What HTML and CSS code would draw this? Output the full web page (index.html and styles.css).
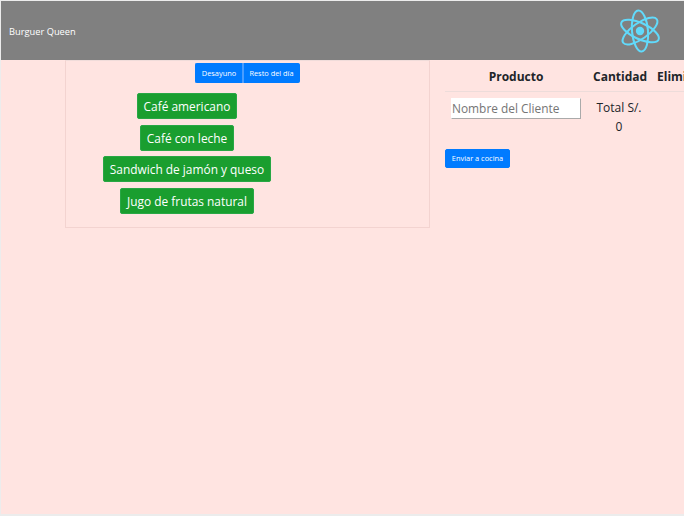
FILE: index.html
```html
<!DOCTYPE html>
<html lang="es">
<head>
<meta charset="utf-8">
<title>Burguer Queen</title>
<link rel="stylesheet" href="styles.css">
</head>
<body>
<div class="app">
  <header class="topbar">
    <span class="brand">Burguer Queen</span>
    <svg class="logo" viewBox="0 0 44 44" aria-hidden="true">
      <circle cx="22" cy="22" r="4.2" fill="#61dafb"/>
      <g fill="none" stroke="#61dafb" stroke-width="2">
        <ellipse cx="22" cy="22" rx="20.5" ry="8" transform="rotate(85 22 22)"/>
        <ellipse cx="22" cy="22" rx="20.5" ry="8" transform="rotate(25 22 22)"/>
        <ellipse cx="22" cy="22" rx="20.5" ry="8" transform="rotate(145 22 22)"/>
      </g>
    </svg>
  </header>
  <main class="content">
    <section class="menu">
      <div class="tabs">
        <button class="btn-small tab-left">Desayuno</button>
        <button class="btn-small tab-right">Resto del día</button>
      </div>
      <div class="items">
        <button class="item">Café americano</button>
        <button class="item">Café con leche</button>
        <button class="item">Sandwich de jamón y queso</button>
        <button class="item">Jugo de frutas natural</button>
      </div>
    </section>
    <section class="order">
      <table class="order-table">
        <thead>
          <tr>
            <th class="col-product">Producto</th>
            <th class="col-qty">Cantidad</th>
            <th class="col-del">Eliminar</th>
          </tr>
        </thead>
        <tbody>
          <tr>
            <td class="col-product"><input class="client" type="text" placeholder="Nombre del Cliente"></td>
            <td class="total">Total S/.<br>0</td>
            <td></td>
          </tr>
        </tbody>
      </table>
      <button class="btn-small send">Enviar a cocina</button>
    </section>
  </main>
</div>
</body>
</html>
```
FILE: styles.css
```css
* { box-sizing: border-box; }
html, body { height: 100%; }
body {
  margin: 0;
  padding: 1px 0 2px 1px;
  background: #ececec;
  overflow: hidden;
  font-family: "Open Sans", "Noto Sans", sans-serif;
  color: #212529;
}
.app {
  width: 683px;
  height: 513px;
  background: #ffe4e1;
  overflow: hidden;
}
.topbar {
  height: 59px;
  background: #808080;
  display: flex;
  align-items: center;
  justify-content: space-between;
  padding: 0 22px 0 8px;
  color: #fff;
  font-size: 9.3px;
}
.brand { padding-top: 2px; }
.logo { width: 44px; height: 44px; flex: none; }
.content {
  display: flex;
  align-items: flex-start;
  padding-left: 64px;
}
.menu {
  flex: none;
  width: 365px;
  height: 168px;
  border: 1px solid #f3d3d0;
  border-top-color: #f0dcda;
  display: flex;
  flex-direction: column;
  align-items: center;
  padding-top: 2px;
}
.tabs { display: flex; }
.btn-small {
  height: 20px;
  padding: 0;
  background: #007bff;
  border: 1px solid #007bff;
  border-radius: 2px;
  color: #fff;
  font-family: inherit;
  font-size: 7.4px;
  white-space: nowrap;
}
.tab-left { width: 48px; border-radius: 2px 0 0 2px; border-right-color: #4a9dff; }
.tab-right { width: 57px; border-radius: 0 2px 2px 0; border-left-color: #4a9dff; }
.items {
  align-self: flex-start;
  width: 242px;
  margin-top: 10px;
  display: flex;
  flex-direction: column;
  align-items: center;
  gap: 5.6px;
}
.item {
  height: 26px;
  padding: 0 6px;
  background: #1a9e2f;
  border: 1px solid #28a745;
  border-radius: 2px;
  color: #fff;
  font-family: inherit;
  font-size: 11.9px;
  white-space: nowrap;
}
.order {
  margin-left: 15px;
  flex: none;
  width: 260px;
}
.order-table {
  border-collapse: collapse;
  table-layout: fixed;
  width: 260px;
  font-size: 12px;
}
.order-table th {
  height: 31px;
  padding: 2px 6px 0;
  font-weight: 700;
  border-bottom: 1px solid #eddcda;
  white-space: nowrap;
  overflow: hidden;
}
.col-product { width: 142px; text-align: center; }
.col-qty { width: 64px; }
.col-del { text-align: left; }
.order-table td { padding: 6px; vertical-align: top; }
.client {
  display: block;
  width: 130px;
  height: 21px;
  padding: 0;
  background: #fff;
  border: 1px solid;
  border-color: #fff #aaa #aaa #fff;
  font-family: inherit;
  font-size: 11.9px;
}
.client::placeholder { color: #757575; opacity: 1; }
.order-table td.total {
  text-align: center;
  line-height: 19px;
  padding: 6px 4px;
}
.send {
  display: block;
  width: 65px;
  height: 19px;
  margin-top: 7px;
}
```
